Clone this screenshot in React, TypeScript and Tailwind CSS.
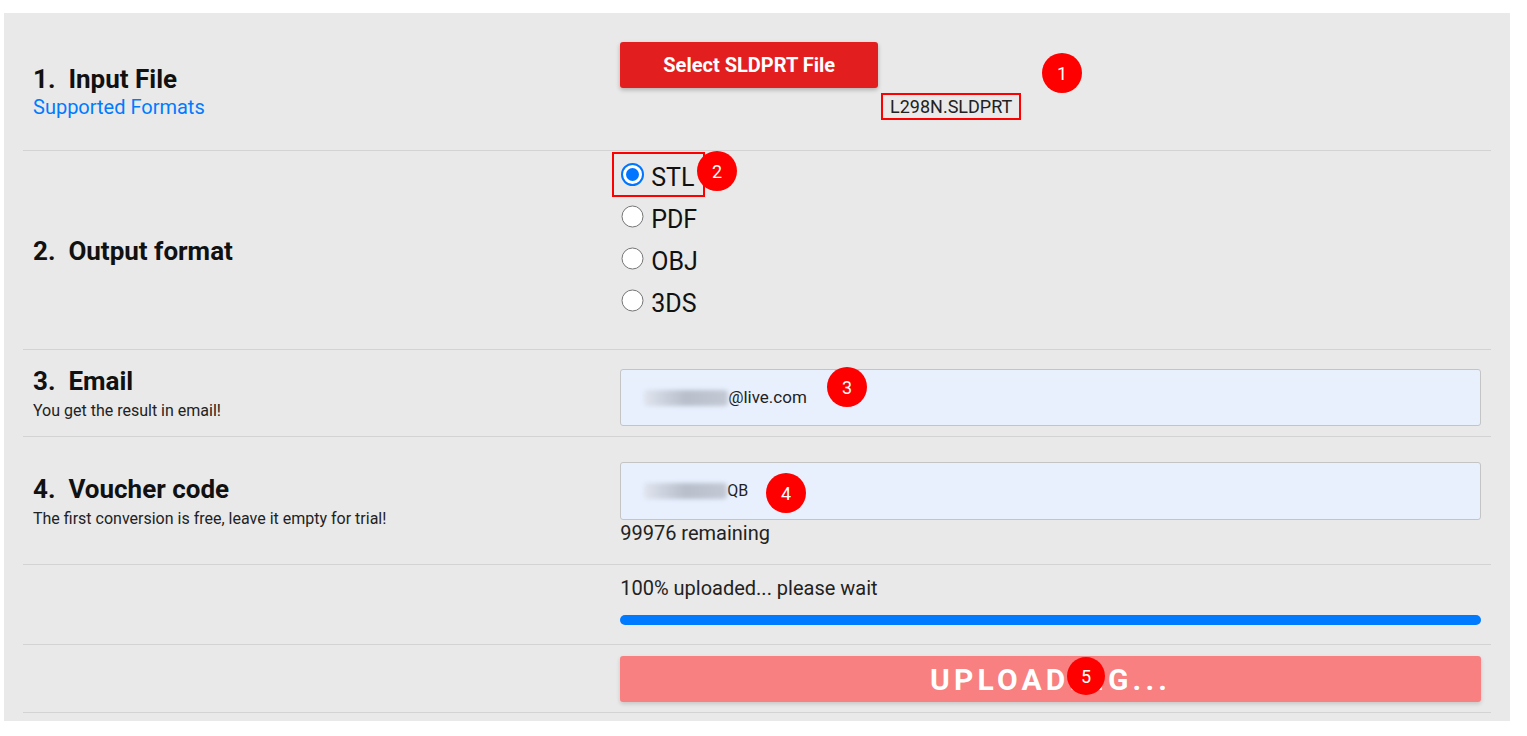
import React from "react";

const Badge = ({ n, className }: { n: number; className: string }) => (
  <div
    className={
      "absolute flex h-[40px] w-[40px] items-center justify-center rounded-full bg-[#ff0000] text-[18px] text-white " +
      className
    }
  >
    {n}
  </div>
);

const Radio = ({ checked }: { checked?: boolean }) => (
  <svg width="23" height="23" viewBox="0 0 23 23" className="shrink-0">
    {checked ? (
      <>
        <circle cx="11.5" cy="11.5" r="10.5" fill="#ffffff" stroke="#0075ff" strokeWidth="2" />
        <circle cx="11.5" cy="11.5" r="6.5" fill="#0075ff" />
      </>
    ) : (
      <circle cx="11.5" cy="11.5" r="10.5" fill="#ffffff" stroke="#767676" strokeWidth="1" />
    )}
  </svg>
);

const Title = ({ children }: { children: React.ReactNode }) => (
  <div className="text-[26px] font-bold leading-[30px] text-[#111]">{children}</div>
);

const Blur = ({ w }: { w: number }) => (
  <span
    className="inline-block h-[16px] rounded-sm bg-gradient-to-r from-[#dfe4ee] via-[#b8bfcb] to-[#c3c9d4] blur-[2px]"
    style={{ width: w }}
  />
);

export default function App() {
  return (
    <div className="min-h-[736px] bg-white pt-[13px] pl-[4px] pr-[17px]" style={{ fontFamily: "Roboto, 'Liberation Sans', sans-serif" }}>
      <div className="bg-[#e9e9e9] px-[19px] pb-[8px] text-[#222]">
        {/* Row 1 */}
        <div className="relative flex h-[138px] border-b border-[#d3d3d3]">
          <div className="w-[40%] px-[10px] pt-[51px]">
            <Title>1.&nbsp; Input File</Title>
            <div className="mt-[1px] text-[20px] leading-[24px] text-[#007bff]">Supported Formats</div>
          </div>
          <div className="w-[60%] px-[10px] pt-[29px]">
            <div className="flex h-[46px] w-[258px] items-center justify-center rounded-[3px] bg-[#e31e1e] text-[20px] font-bold text-white shadow-[0_2px_4px_rgba(0,0,0,0.25)]">
              Select SLDPRT File
            </div>
            <div className="ml-[261px] mt-[5px] inline-flex h-[27px] w-[140px] items-center justify-center border-2 border-[#ff0000] text-[18px] text-[#222]">
              L298N.SLDPRT
            </div>
          </div>
          <Badge n={1} className="left-[1019px] top-[40px]" />
        </div>

        {/* Row 2 */}
        <div className="relative flex h-[199px] border-b border-[#d3d3d3]">
          <div className="flex w-[40%] items-center px-[10px] pt-[2px]">
            <Title>2.&nbsp; Output format</Title>
          </div>
          <div className="w-[60%] px-[10px] pt-[12px]">
            <div className="flex flex-col gap-[19px]">
              {["STL", "PDF", "OBJ", "3DS"].map((f, i) => (
                <div key={f} className="flex h-[23px] items-center gap-[7px] pl-[1px] text-[25px] leading-[25px] text-[#111]">
                  <Radio checked={i === 0} />
                  <span className="pt-[6px]">{f}</span>
                </div>
              ))}
            </div>
          </div>
          <div className="absolute left-[589px] top-[1px] h-[45px] w-[93px] border-2 border-[#ff0000]" />
          <Badge n={2} className="left-[674px] top-[0px]" />
        </div>

        {/* Row 3 */}
        <div className="relative flex h-[87px] border-b border-[#d3d3d3]">
          <div className="w-[40%] px-[10px] pt-[16px]">
            <Title>3.&nbsp; Email</Title>
            <div className="mt-[6px] text-[16px] leading-[18px] text-[#222]">You get the result in email!</div>
          </div>
          <div className="w-[60%] px-[10px] pt-[19px]">
            <div className="flex h-[57px] items-center rounded-[3px] border border-[#c4c4c4] bg-[#e8f0fe] pl-[23px] text-[17px] text-[#222]">
              <Blur w={84} />
              <span>@live.com</span>
            </div>
          </div>
          <Badge n={3} className="left-[804px] top-[17px]" />
        </div>

        {/* Row 4 */}
        <div className="relative flex h-[128px] border-b border-[#d3d3d3]">
          <div className="w-[40%] px-[10px] pt-[37px]">
            <Title>4.&nbsp; Voucher code</Title>
            <div className="mt-[6px] text-[16px] leading-[18px] text-[#222]">The first conversion is free, leave it empty for trial!</div>
          </div>
          <div className="w-[60%] px-[10px] pt-[25px]">
            <div className="flex h-[58px] items-center rounded-[3px] border border-[#c4c4c4] bg-[#e8f0fe] pl-[23px] text-[16px] text-[#222]">
              <Blur w={83} />
              <span>QB</span>
            </div>
            <div className="mt-[1px] text-[20px] leading-[24px] text-[#222]">99976 remaining</div>
          </div>
          <Badge n={4} className="left-[743px] top-[36px]" />
        </div>

        {/* Row 5 */}
        <div className="flex h-[80px] border-b border-[#d3d3d3]">
          <div className="w-[40%] px-[10px]" />
          <div className="w-[60%] px-[10px] pt-[11px]">
            <div className="text-[20px] leading-[24px] text-[#222]">100% uploaded... please wait</div>
            <div className="mt-[15px] h-[10px] rounded-full bg-[#007bff]" />
          </div>
        </div>

        {/* Row 6 */}
        <div className="relative flex h-[68px] border-b border-[#d3d3d3]">
          <div className="w-[40%] px-[10px]" />
          <div className="w-[60%] px-[10px] pt-[11px]">
            <div className="flex h-[46px] items-center justify-center rounded-[3px] bg-[#f88080] text-[30px] font-bold tracking-[0.14em] text-white shadow-[0_2px_4px_rgba(0,0,0,0.15)]">
              UPLOADING...
            </div>
          </div>
          <Badge n={5} className="left-[1044px] top-[12px] !h-[38px] !w-[38px]" />
        </div>
      </div>
    </div>
  );
}
